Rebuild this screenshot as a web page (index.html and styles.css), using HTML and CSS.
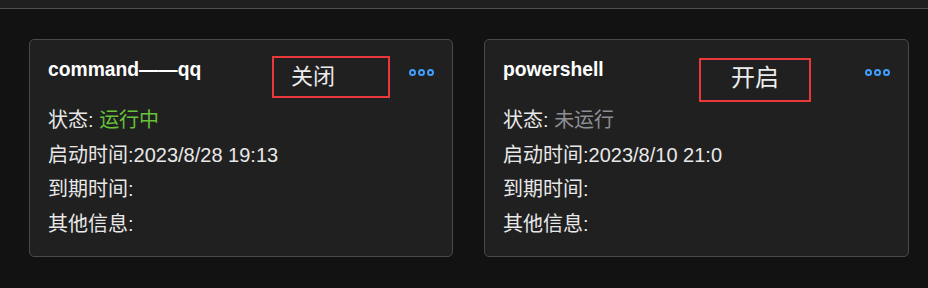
FILE: index.html
```html
<!DOCTYPE html>
<html lang="zh-CN">
<head>
<meta charset="utf-8">
<title>进程列表</title>
<link rel="stylesheet" href="styles.css">
</head>
<body>
<div class="topbar"></div>
<main class="list">
  <section class="card">
    <div class="card-head">
      <div class="title">command——qq</div>
      <div class="btn btn-close">关闭</div>
      <div class="dots"><span></span><span></span><span></span></div>
    </div>
    <div class="info">
      <div class="row">状态: <span class="running">运行中</span></div>
      <div class="row">启动时间:2023/8/28 19:13</div>
      <div class="row">到期时间:</div>
      <div class="row">其他信息:</div>
    </div>
  </section>
  <section class="card">
    <div class="card-head">
      <div class="title">powershell</div>
      <div class="btn btn-open">开启</div>
      <div class="dots"><span></span><span></span><span></span></div>
    </div>
    <div class="info">
      <div class="row">状态: <span class="stopped">未运行</span></div>
      <div class="row">启动时间:2023/8/10 21:0</div>
      <div class="row">到期时间:</div>
      <div class="row">其他信息:</div>
    </div>
  </section>
</main>
</body>
</html>
```

FILE: styles.css
```css
* { box-sizing: border-box; }

html, body {
  margin: 0;
  padding: 0;
  background: #121212;
  font-family: "Liberation Sans", "Noto Sans CJK SC", sans-serif;
  color: #e8e8e8;
}

.topbar {
  height: 9px;
  background: #1f1f1f;
  border-bottom: 1px solid #4d4d4d;
}

.list {
  display: flex;
  gap: 31px;
  padding: 30px 0 0 29px;
}

.card {
  width: 424px;
  height: 218px;
  background: #202020;
  border: 1px solid #4a4a4a;
  border-radius: 5px;
  padding: 0 18px 0 18px;
}

.card + .card {
  width: 425px;
}

.card-head {
  display: flex;
  align-items: flex-start;
  height: 62px;
}

.title {
  flex: 1;
  margin-top: 18px;
  font-size: 19.3px;
  line-height: 24px;
  font-weight: bold;
  color: #ffffff;
  white-space: nowrap;
}

.btn {
  display: flex;
  align-items: center;
  border: 2px solid #e8383a;
  color: #ececec;
  line-height: 1;
}

.btn-close {
  margin-top: 16px;
  width: 118px;
  height: 42px;
  font-size: 22px;
  padding-left: 17px;
  margin-right: 19px;
}

.btn-open {
  margin-top: 18px;
  width: 112px;
  height: 44px;
  font-size: 24px;
  justify-content: center;
  padding-bottom: 5px;
  margin-right: 54px;
}

.dots {
  display: flex;
  gap: 2px;
  margin-top: 29px;
}

.dots span {
  width: 7px;
  height: 7px;
  border: 2px solid #409eff;
  border-radius: 50%;
}

.info {
  padding-top: 1px;
}

.row {
  font-size: 20px;
  line-height: 34.5px;
  white-space: nowrap;
}

.running { color: #67c23a; }
.stopped { color: #8d8f93; }
```
